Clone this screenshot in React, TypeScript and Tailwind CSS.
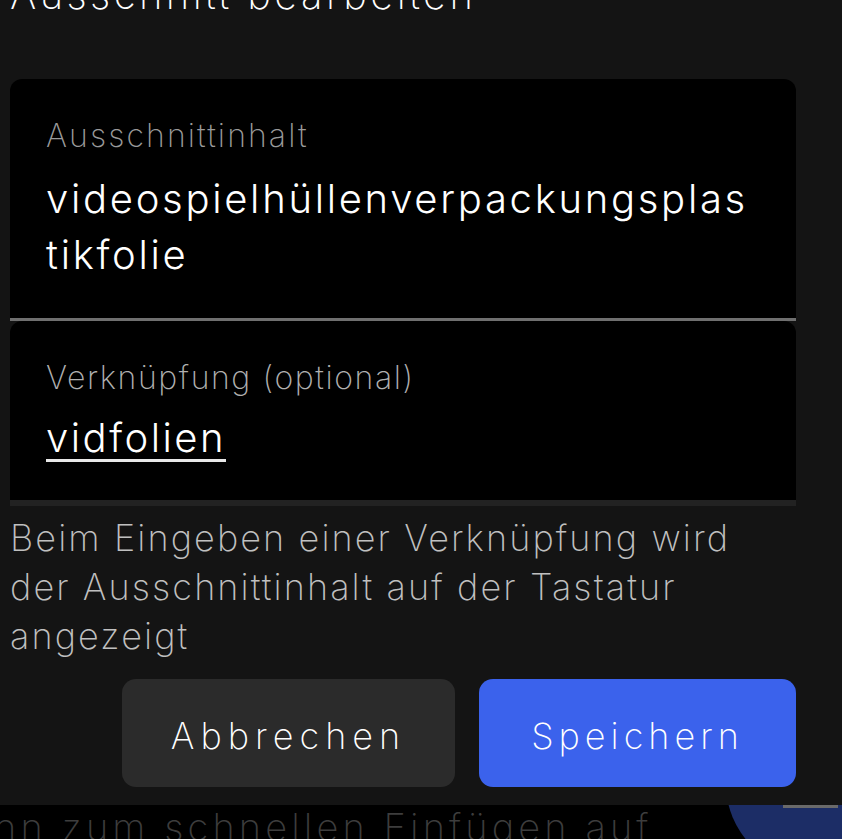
const font = "font-['Inter','Liberation_Sans',sans-serif]";

function Field({ label, labelClass, children, className }: { label: string; labelClass: string; children: React.ReactNode; className: string }) {
  return (
    <div className={`rounded-t-[12px] bg-black pl-[36px] pr-[42px] ${className}`}>
      <p className={`text-[32px] font-extralight leading-[40px] ${labelClass}`}>{label}</p>
      {children}
    </div>
  );
}

export default function App() {
  return (
    <div className={`flex h-[839px] w-[842px] flex-col overflow-hidden bg-black ${font}`}>
      <div className="h-[805px] shrink-0 overflow-hidden bg-[#141414] pl-[10px] pr-[46px]">
        <h1 className="-mt-[28px] h-[107px] text-[40px] font-extralight leading-[46px] tracking-[3.4px] text-white">Ausschnitt bearbeiten</h1>

        <Field label="Ausschnittinhalt" labelClass="tracking-[2.1px] text-[#9a9a9a]" className="h-[239px] pt-[37px]">
          <p className="mt-[15px] text-[40px] font-light leading-[56px] tracking-[2.7px] break-all text-white">videospielhüllenverpackungsplastikfolie</p>
        </Field>
        <div className="h-[3px] bg-[#6f6f6f]" />
        <Field label="Verknüpfung (optional)" labelClass="tracking-[1.6px] text-[#b0b0b0]" className="h-[179px] pt-[37px]">
          <p className="mt-[18px] inline-block h-[46px] border-b-[3px] border-[#e8e8e8] text-[40px] font-light leading-[43px] tracking-[2.5px] text-white">vidfolien</p>
        </Field>
        <div className="h-[6px] bg-[#222222]" />

        <p className="mt-[8px] text-[36px] font-extralight leading-[49px] tracking-[2.1px] text-[#c0c0c0]">
          Beim Eingeben einer Verknüpfung wird der Ausschnittinhalt auf der Tastatur angezeigt
        </p>

        <div className="mt-[18px] flex justify-end gap-[24px]">
          <button className="h-[108px] w-[333px] rounded-[14px] bg-[#2b2b2b] pt-[6px] text-[36px] font-extralight tracking-[6px] text-white">Abbrechen</button>
          <button className="h-[108px] w-[317px] rounded-[14px] bg-[#3b62ec] pt-[6px] text-[36px] font-extralight tracking-[5px] text-white">Speichern</button>
        </div>
      </div>

      <div className="relative flex-1 overflow-hidden bg-black">
        <p className="absolute -left-[6px] top-[-1px] whitespace-nowrap text-[38px] font-extralight leading-[46px] tracking-[4.1px] text-[#3d3d3d]">nn zum schnellen Einfügen auf</p>
        <div className="absolute -top-[108px] left-[726px] size-[174px] rounded-full bg-[#1c2d66]" />
        <div className="absolute right-[4px] top-0 h-[3px] w-[55px] bg-[#6a6a6a]" />
      </div>
    </div>
  );
}
